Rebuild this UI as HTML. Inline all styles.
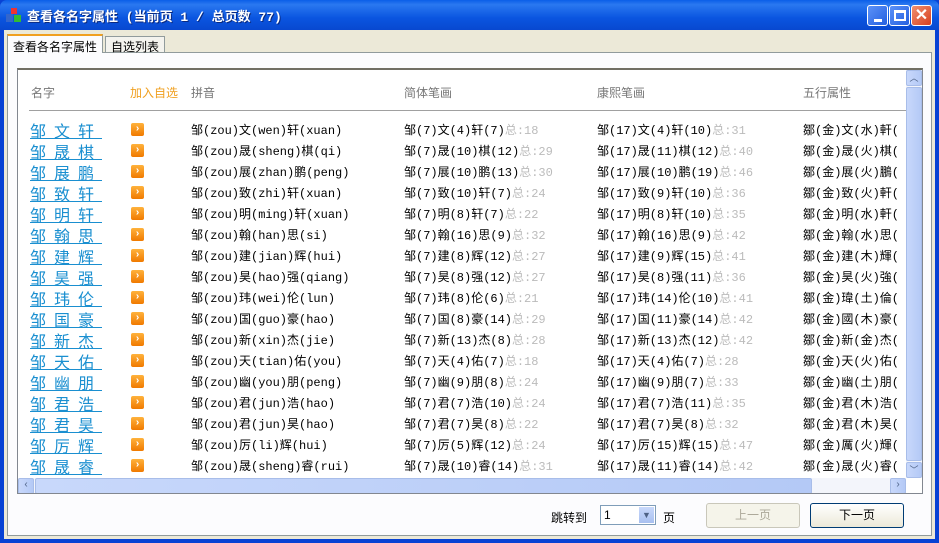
<!DOCTYPE html>
<html><head><meta charset="utf-8"><style>
*{margin:0;padding:0;box-sizing:border-box}
body{width:939px;height:543px;overflow:hidden;background:#0842d4;font-family:"Liberation Sans","Noto Sans CJK SC",sans-serif;position:relative}
.title{position:absolute;left:0;top:0;width:939px;height:30px;background:linear-gradient(#0a5ee8,#2a78f0 15%,#0a55e0 60%,#0848d0);border-radius:7px 7px 0 0}
.title span{position:absolute;left:27px;top:6px;color:#fff;font-weight:bold;font-size:13px;font-family:"Liberation Mono","Noto Sans CJK SC",monospace;text-shadow:1px 1px #0a2a80}
.tb{position:absolute;top:5px;width:21px;height:21px;border:1px solid #fff;border-radius:3px;background:linear-gradient(135deg,#5c92f8,#2460e0)}
.client{position:absolute;left:4px;top:30px;width:931px;height:509px;background:#ECE9D8}
.panel{position:absolute;left:3px;top:22px;width:925px;height:484px;background:#fcfcfe;border:1px solid #919b9c}
.tab{position:absolute;font-size:12px;color:#000;padding:2px 5px;border:1px solid #919b9c;border-bottom:none;background:#f4f3ee}
.list{position:absolute;left:9px;top:15px;width:906px;height:426px;border:1px solid #828790;border-top:2px solid #716f64;background:#fff;overflow:hidden}
.hd{position:absolute;top:14px;font-size:12px;color:#777}
.line{position:absolute;left:11px;top:40px;width:877px;height:1px;background:#a0a0a0}
.row{position:absolute;left:0;height:21px;width:888px;font-size:12px;white-space:nowrap;font-family:"Liberation Mono","Noto Sans CJK SC",monospace}
.row div{position:absolute;top:3px;overflow:hidden}
.nm{left:12px;top:0!important;font-size:16px;color:#1a8fd0;letter-spacing:8px;font-family:"Noto Sans CJK SC",sans-serif;text-decoration:underline}
.ic{left:113px;top:5px!important;width:13px;height:13px;background:linear-gradient(#ffb23c,#f07a00);border-radius:2px;color:#fff;font-size:10px;line-height:13px;text-align:center;font-weight:bold}
.g{color:#bbb}
.vs{position:absolute;left:888px;top:0;width:16px;height:408px;background:#f3f5fb}
.hs{position:absolute;left:0;top:408px;width:888px;height:16px;background:#f3f5fb}
.sb{position:absolute;background:linear-gradient(90deg,#c8d8fb,#b4c9f6);border:1px solid #a8bde9;border-radius:2px}
.btn{position:absolute;top:473px;width:94px;height:25px;border:1px solid #003c74;border-radius:3px;background:linear-gradient(#fff,#ece9d8);font-size:12px;text-align:center;line-height:23px}
</style></head><body>
<div class="title"><svg style="position:absolute;left:6px;top:8px" width="16" height="15"><rect x="5" y="0" width="6" height="6" fill="#e33"/><rect x="0" y="6" width="7" height="8" fill="#36c"/><rect x="8" y="7" width="7" height="7" fill="#3b3"/></svg><span>查看各名字属性 (当前页 1 / 总页数 77)</span>
<div class="tb" style="left:867px"><div style="position:absolute;left:6px;top:13px;width:8px;height:3px;background:#fff"></div></div>
<div class="tb" style="left:889px"><div style="position:absolute;left:4px;top:4px;width:12px;height:11px;border:2px solid #fff;border-top-width:3px"></div></div>
<div class="tb" style="left:911px;background:linear-gradient(135deg,#f09070,#d84020);color:#fff;font-size:16px;text-align:center;line-height:19px;font-weight:bold">✕</div>
</div>
<div class="client">
<div class="panel">
<div class="list">
<div class="hd" style="left:13px">名字</div><div class="hd" style="left:112px;color:#f0a020">加入自选</div><div class="hd" style="left:173px">拼音</div><div class="hd" style="left:386px">简体笔画</div><div class="hd" style="left:579px">康熙笔画</div><div class="hd" style="left:785px">五行属性</div>
<div class="line"></div>
<div id="rows"></div>
<div class="vs"><div class="sb" style="left:0;top:0;width:16px;height:16px;text-align:center;font-size:9px;line-height:14px;color:#4d6185">︿</div><div class="sb" style="left:0;top:17px;width:16px;height:374px"></div><div class="sb" style="left:0;top:392px;width:16px;height:16px;text-align:center;font-size:9px;line-height:14px;color:#4d6185">﹀</div></div>
<div class="hs"><div class="sb" style="left:0;top:0;width:16px;height:16px;font-size:10px;text-align:center;color:#4d6185">‹</div><div class="sb" style="left:17px;top:0;width:777px;height:16px"></div><div class="sb" style="left:872px;top:0;width:16px;height:16px;font-size:10px;text-align:center;color:#4d6185">›</div></div>
</div>
</div>
<div class="tab" style="left:3px;top:4px;height:19px;background:#fcfcfe;border-top:2px solid #f0a020">查看各名字属性</div>
<div class="tab" style="left:101px;top:6px;height:16px;padding-top:1px">自选列表</div>
<div style="position:absolute;left:547px;top:479px;font-size:12px">跳转到</div>
<div style="position:absolute;left:596px;top:475px;width:56px;height:20px;border:1px solid #7f9db9;background:#fff;font-size:12px;padding:2px 3px">1<div style="position:absolute;right:1px;top:1px;width:15px;height:16px;background:linear-gradient(#c8d8fb,#a8c0f0);font-size:9px;text-align:center;color:#4d6185;line-height:16px">▼</div></div>
<div style="position:absolute;left:659px;top:479px;font-size:12px">页</div>
<div class="btn" style="left:702px;border-color:#c9c7ba;color:#aca899;background:#f5f4ea">上一页</div>
<div class="btn" style="left:806px">下一页</div>
</div>
<script>
var d=[["文轩","文(wen)轩(xuan)","文(4)轩(7)",18,"文(4)轩(10)",31,"文(水)軒("],
["晟棋","晟(sheng)棋(qi)","晟(10)棋(12)",29,"晟(11)棋(12)",40,"晟(火)棋("],
["展鹏","展(zhan)鹏(peng)","展(10)鹏(13)",30,"展(10)鹏(19)",46,"展(火)鵬("],
["致轩","致(zhi)轩(xuan)","致(10)轩(7)",24,"致(9)轩(10)",36,"致(火)軒("],
["明轩","明(ming)轩(xuan)","明(8)轩(7)",22,"明(8)轩(10)",35,"明(水)軒("],
["翰思","翰(han)思(si)","翰(16)思(9)",32,"翰(16)思(9)",42,"翰(水)思("],
["建辉","建(jian)辉(hui)","建(8)辉(12)",27,"建(9)辉(15)",41,"建(木)輝("],
["昊强","昊(hao)强(qiang)","昊(8)强(12)",27,"昊(8)强(11)",36,"昊(火)強("],
["玮伦","玮(wei)伦(lun)","玮(8)伦(6)",21,"玮(14)伦(10)",41,"瑋(土)倫("],
["国豪","国(guo)豪(hao)","国(8)豪(14)",29,"国(11)豪(14)",42,"國(木)豪("],
["新杰","新(xin)杰(jie)","新(13)杰(8)",28,"新(13)杰(12)",42,"新(金)杰("],
["天佑","天(tian)佑(you)","天(4)佑(7)",18,"天(4)佑(7)",28,"天(火)佑("],
["幽朋","幽(you)朋(peng)","幽(9)朋(8)",24,"幽(9)朋(7)",33,"幽(土)朋("],
["君浩","君(jun)浩(hao)","君(7)浩(10)",24,"君(7)浩(11)",35,"君(木)浩("],
["君昊","君(jun)昊(hao)","君(7)昊(8)",22,"君(7)昊(8)",32,"君(木)昊("],
["厉辉","厉(li)辉(hui)","厉(5)辉(12)",24,"厉(15)辉(15)",47,"厲(火)輝("],
["晟睿","晟(sheng)睿(rui)","晟(10)睿(14)",31,"晟(11)睿(14)",42,"晟(火)睿("]];
var h="";d.forEach(function(r,i){h+='<div class="row" style="top:'+(48+i*21)+'px"><div class="nm">邹'+r[0]+'</div><div class="ic">›</div><div style="left:173px">邹(zou)'+r[1]+'</div><div style="left:386px">邹(7)'+r[2]+'<span class="g">总:'+r[3]+'</span></div><div style="left:579px">邹(17)'+r[4]+'<span class="g">总:'+r[5]+'</span></div><div style="left:785px;width:103px">鄒(金)'+r[6]+'</div></div>'});
document.getElementById("rows").innerHTML=h;
</script>
</body></html>
